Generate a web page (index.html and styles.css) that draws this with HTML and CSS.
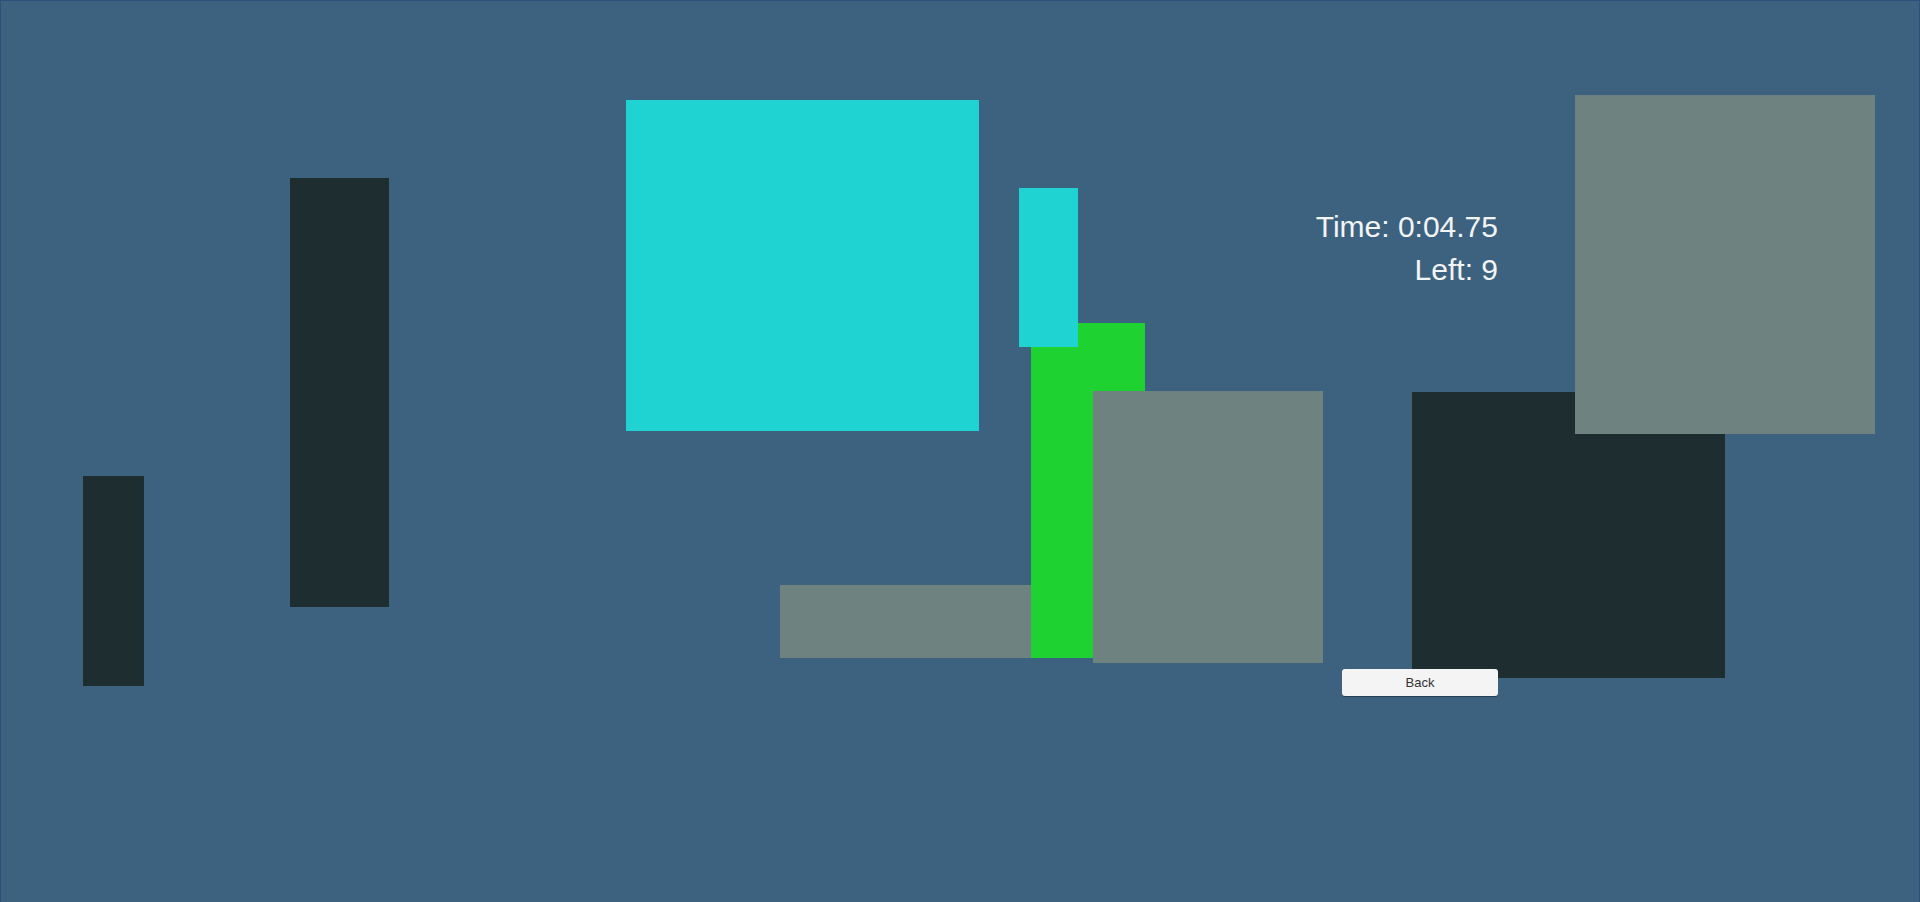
FILE: index.html
```html
<!DOCTYPE html>
<html lang="en">
<head>
<meta charset="utf-8">
<title>Game</title>
<link rel="stylesheet" href="styles.css">
</head>
<body>
<main class="stage">
  <div class="block dark b1"></div>
  <div class="block dark b2"></div>
  <div class="block cyan b3"></div>
  <div class="block grey b4"></div>
  <div class="block green b5"></div>
  <div class="block cyan b6"></div>
  <div class="block grey b7"></div>
  <div class="block dark b8"></div>
  <div class="block grey b9"></div>
  <div class="hud">
    <div class="hud-line">Time: 0:04.75</div>
    <div class="hud-line">Left: 9</div>
  </div>
  <button class="back-btn" type="button">Back</button>
</main>
</body>
</html>
```
FILE: styles.css
```css
html, body {
  margin: 0;
  padding: 0;
  width: 100%;
  height: 100%;
  overflow: hidden;
  background: #3d6280;
}

.stage {
  position: relative;
  width: 1920px;
  height: 902px;
  box-sizing: border-box;
  border: 1px solid #2f4f7d;
  border-bottom: none;
  background: #3d6280;
  font-family: "Liberation Sans", Arial, sans-serif;
}

.block {
  position: absolute;
}

.dark { background: #1e2e30; }
.cyan { background: #1fd3d3; }
.green { background: #1ed331; }
.grey { background: #6e837f; }

.b1 { left: 82px; top: 475px; width: 61px; height: 210px; }
.b2 { left: 289px; top: 177px; width: 99px; height: 429px; }
.b3 { left: 625px; top: 99px; width: 353px; height: 331px; }
.b4 { left: 779px; top: 584px; width: 252px; height: 73px; }
.b5 { left: 1030px; top: 322px; width: 114px; height: 335px; }
.b6 { left: 1018px; top: 187px; width: 59px; height: 159px; }
.b7 { left: 1092px; top: 390px; width: 230px; height: 272px; }
.b8 { left: 1411px; top: 391px; width: 313px; height: 286px; }
.b9 { left: 1574px; top: 94px; width: 300px; height: 339px; }

.hud {
  position: absolute;
  right: 421px;
  top: 204px;
  text-align: right;
  color: #f2f4f6;
  font-size: 30px;
  line-height: 43px;
}

.back-btn {
  position: absolute;
  left: 1341px;
  top: 668px;
  width: 156px;
  height: 27px;
  padding: 0;
  border: none;
  border-radius: 3px;
  background: #f4f4f4;
  box-shadow: 0 1px 0 rgba(0, 0, 0, 0.35);
  color: #333333;
  font-family: "Liberation Sans", Arial, sans-serif;
  font-size: 13px;
  line-height: 27px;
  text-align: center;
}
```
